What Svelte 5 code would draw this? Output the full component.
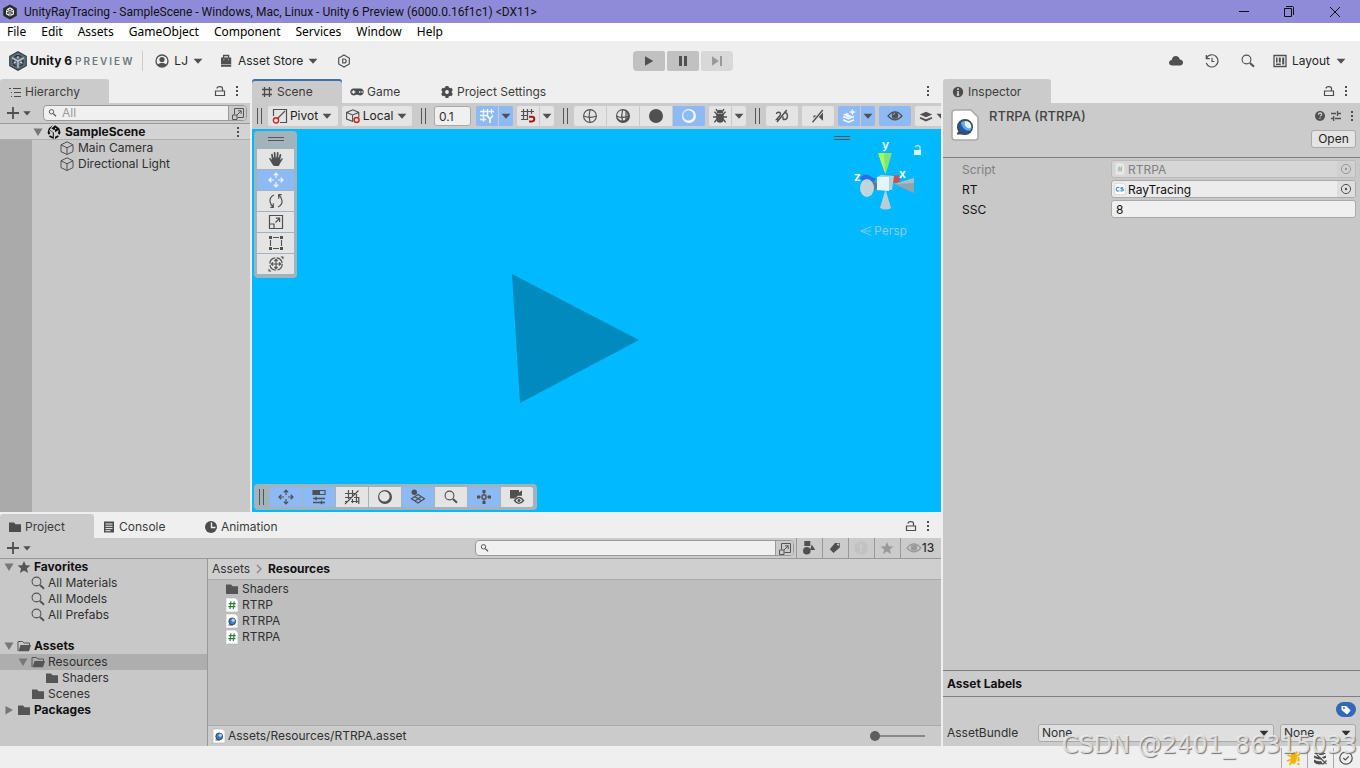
<script>
  const S = 'fill="none" stroke="currentColor"';
  const icons = {
    unity: '<path d="M8 .5 14.8 4.3v7.5L8 15.5 1.2 11.8V4.3z" fill="#2b2b2b"/><path d="M8 3.2 12 5.4v4.8L8 12.6 4 10.2V5.4z" fill="#ededed"/><path d="M8 8v4.6M8 8 4 5.4M8 8l4-2.6" stroke="#444" stroke-width="1"/><circle cx="8" cy="5.6" r=".9" fill="#222"/><circle cx="6" cy="9" r=".9" fill="#222"/><circle cx="10" cy="9" r=".9" fill="#222"/>',
    unity6: '<path d="M8 .6 14.6 4.3v7.4L8 15.4 1.4 11.7V4.3z" fill="#5d6b75" stroke="#2e3a43" stroke-width=".9"/><path d="M8 2.6v3.4M3.2 5.4 8 8l4.8-2.6M8 8v5.4M3.4 10.4l3-1.8M12.6 10.4l-3-1.8" fill="none" stroke="#c6d3db" stroke-width="1"/><path d="M5.2 4.9 8 3.4l2.8 1.5M4 7.2v3.3L6.6 12M12 7.2v3.3L9.4 12" fill="none" stroke="#27323a"/>',
    scene: '<path d="M6.8 1.2 2.8 4.3 1.6 8.4l.8 2.3 1.9-1.2L3 6l3.8 2.2v4.6l-3-1.6L3 12.8l4.8 2.3V8.4L3.7 5.8zM9 1.2l4.3 3 1.2 4.2-.8 2.3-1.8-1.2.8-3.4-3.7 2.1v4.6l3-1.6.8 1.5L9 15.1M5.4 4.6 8 6.1l2.8-1.5L9 3.7V1.2M6.8 1.2v2.5z" fill="#111"/>',
    user: `<circle cx="8" cy="8" r="6" ${S} stroke-width="1.3"/><circle cx="8" cy="6.5" r="2.6" fill="currentColor"/><path d="M3.6 11.6Q8 8 12.4 11.6 10.8 13.8 8 13.8T3.6 11.6" fill="currentColor"/>`,
    bag: `<path d="M5.6 5V2.5h5V5" ${S} stroke-width="1.3"/><path d="M3 4.5h10.2v9.3H3z" fill="currentColor"/><path d="M5.9 5.8v1.5M10.3 5.8v1.5M3 11.5h10" stroke="#aaa"/>`,
    hex: `<path d="M8 1.9 13.3 5v6L8 14.1 2.7 11V5z" ${S} stroke-width="1.2"/><path d="M6.7 6h1.4a2 2 0 0 1 0 4H6.7z" ${S} stroke-width="1.2"/>`,
    hierarchy: `<path d="M6 4.5h8M7 8.5h7M7 12.5h7M2 4.5h2M4 8.5h1M4 12.5h1" ${S}/>`,
    lock: `<path d="M3.5 8h9v4.5h-9zM5 5.5C5 3 10.5 3 10.5 5.5V8" ${S} stroke-width="1.2"/>`,
    dots: '<path d="M7 3h2v2H7zm0 4h2v2H7zm0 4h2v2H7z" fill="currentColor"/>',
    plus: `<path d="M8 2v12M2 8h12" ${S} stroke-width="1.8"/>`,
    down: '<path d="M3 5.5h10L8 11.2z" fill="currentColor"/>',
    right: '<path d="M4.5 4 12 8l-7.5 4.5z" fill="currentColor"/>',
    fold: '<path d="M3.5 4.5h9L8 12z" fill="currentColor"/>',
    find: `<circle cx="6.5" cy="6.5" r="4.4" ${S} stroke-width="1.1"/><path d="m10 10 4 3.7" ${S} stroke-width="2"/>`,
    smallfind: `<circle cx="6.5" cy="6.8" r="2.2" ${S}/><path d="m8.3 8.6 2.7 2.7" ${S} stroke-width="1.3"/>`,
    popup: `<path d="M4.5 8.5v-6h9v9h-6M2.5 9h4.5v4.5H2.5z" ${S}/><path d="m7 9 4-4M8 4.8h3.2V8" ${S}/>`,
    cube: `<path d="M8 1.8 14 4.8v6.8L8 14.5 2 11.6V4.8zM2 4.8l6 3 6-3M8 7.8v6.7" ${S}/>`,
    grid: `<path d="M5.5 3v10M10.5 3v10M3 5.5h10M3 10.5h10" ${S} stroke-width="1.3"/>`,
    game: '<path d="M5 4.5h6a3.5 3.5 0 1 1-2 6.2H7A3.5 3.5 0 1 1 5 4.5z" fill="currentColor"/><path d="M2.7 8h3.6M4.5 6.2v3.6M10 8h1.4M12.5 8h1.2" stroke="#eee" stroke-width="1.3"/>',
    gear: `<circle cx="8" cy="8" r="3.4" ${S} stroke-width="3"/><path d="M8 2v2M8 12v2M2.8 5l1.8 1M11.4 10l1.8 1M2.8 11l1.8-1M11.4 6l1.8-1" ${S} stroke-width="3"/>`,
    pivot: `<path d="M1.5 8V1.5h13v13H8M6 10l7-7" ${S} stroke-width="1.2"/><circle cx="4" cy="12.4" r="2.6" fill="#e4e4e4" stroke="#c22" stroke-width="1.4"/>`,
    local: `<path d="M8 13.5 1.6 11V4.4L8 1.8l5.8 2.6v5M1.6 4.4l6 2.5 6.2-2.5M7.6 7v6.4" ${S} stroke-width="1.1"/><circle cx="11.6" cy="12" r="2.5" fill="#e4e4e4" stroke="#c22" stroke-width="1.4"/>`,
    gridy: `<path d="M4.5 1v12.5M8.5 1v7M12.5 1v5M1 3.5h14M1 7.5h8M1 11.5h6" ${S} stroke-width="1.3"/><path d="m8 7.5 3 3.5 3-3.5M11 11v4" ${S} stroke-width="1.7"/>`,
    snap: `<path d="M3.5 1v11M7.5 1v11M11.5 1v5M1 3.5h13M1 7.5h6M1 11.5h6" ${S} stroke-width="1.2"/><path d="M9 8.8h3a2.3 2.3 0 0 1 0 4.6H9" fill="none" stroke="#b51217" stroke-width="2"/>`,
    wire: `<circle cx="8" cy="8" r="6.4" ${S} stroke-width="1.1"/><path d="M1.5 8Q8 10.7 14.5 8M8 1.5Q6.2 8 8 14.5" ${S} stroke-width="1.1"/>`,
    shadewire: `<path fill-rule="evenodd" d="M8 1a7 7 0 1 1 0 14A7 7 0 0 1 8 1zM7.4 2.2a5.2 5.2 0 1 0 0 10.4 5.2 5.2 0 0 0 0-10.4z" fill="currentColor"/><path d="M1.8 8.2Q7 10.6 12.8 8.4M7.6 1.8Q6 7.5 7.4 13M11 3v9" ${S} stroke-width="1.2"/>`,
    solid: '<circle cx="8" cy="8" r="7" fill="currentColor"/>',
    shaded: '<path fill-rule="evenodd" d="M8 1a7 7 0 1 1 0 14A7 7 0 0 1 8 1zM7.4 2.2a5.2 5.2 0 1 0 0 10.4 5.2 5.2 0 0 0 0-10.4z" fill="currentColor"/>',
    bug: `<path d="M4.2 5.5h7.6v5a3.8 4.2 0 0 1-7.6 0zM4.8 5a3.2 3.2 0 0 1 6.4 0z" fill="currentColor"/><path d="M5.5 3.4 4 1M10.5 3.4 12 1M5 6.5 2.4 3.6M11 6.5l2.6-2.9M5 9H1M11 9h4M5 11l-2.6 3.4M11 11l2.6 3.4" ${S} stroke-width="1.4"/>`,
    two: `<path d="M2.5 6Q2.7 4 5 4.3 7.7 5 5.6 8L2.5 11.6h3M9 11.5h1.4c4 0 4-7 0-7M9 8.5v3M3 14 12.8 2" ${S} stroke-width="1.4"/>`,
    audio: `<path d="M2.5 14.2 12.8 2" ${S} stroke-width="1.4"/><path d="M3.5 7.4h3L3.5 10zM8.8 9 13 4.5v8.3z" fill="currentColor"/>`,
    fx: `<path d="m2 8.5 5.5 2.3L13 8.5M2 11.7l5.5 2.4 5.5-2.4" ${S} stroke-width="1.5"/><path d="M2 6.6 6.5 4.7q1 2 3 2.6l1.6 1-4 1.4zM11.4.6l1 2.4 2.6 1-2.6 1-1 2.6-1-2.6-2.6-1 2.6-1z" fill="currentColor"/>`,
    eye: `<path d="M1 8q7-8.2 14 0-7 7.8-14 0z" ${S} stroke-width="1.2"/><circle cx="8" cy="7.5" r="3.2" fill="currentColor"/><path d="M6.5 7q0-1.5 1.5-1.6" fill="none" stroke="#aaa"/>`,
    layers: '<path d="M8 3.8 14.2 6.5 8 9.3 1.8 6.5z" fill="currentColor"/><path d="M2 9.7 8 12.4l6-2.7" fill="none" stroke="currentColor" stroke-width="1.8"/>',
    hand: `<path d="M4.7 8 4 3.6M6.9 7.5 6.6 1.8M9.3 7.5l.4-5.7M11.4 8l1-4.2" ${S} stroke-width="1.7" stroke-linecap="round"/><path d="M1 7.4q1.2-.8 2 .4l1 1V6.6h8.2v2.6l1.4-1.7q1.4-.5 1.2.6L12 12.6 10.8 15H6Q4 13 1 7.4z" fill="currentColor"/>`,
    move: `<path d="M8 1v5M8 10v5M1 8h5M10 8h5M5.8 3.3 8 1l2.2 2.3M5.8 12.7 8 15l2.2-2.3M3.3 5.8 1 8l2.3 2.2M12.7 5.8 15 8l-2.3 2.2" ${S} stroke-width="1.2"/>`,
    rotate: `<path d="M6 2Q1.5 4.2 2 8.4q.5 3.2 3 5.6M2.3 14.3h3v-4M10 14q4.5-2.2 4-6.4-.5-3.2-3-5.6M13.7 1.7h-3v4" ${S} stroke-width="1.2"/>`,
    scale: `<path d="M1.5 1.5h13v13h-13zM1.5 10h4.5v4.5M7.5 8.5l4-4M7.8 4.2h3.8V8" ${S} stroke-width="1.2"/>`,
    rect: `<path d="M5 2.5h6M5 13.5h6M2.5 5v6M13.5 5v6" ${S} stroke-width="1.1"/><path d="M1 1h3v3H1zm11 0h3v3h-3zM1 12h3v3H1zm11 0h3v3h-3z" fill="currentColor"/>`,
    transform: `<circle cx="8" cy="8" r="6.2" ${S} stroke-width="1.2" stroke-dasharray="8 1.7"/><path d="M8 3v10M3 8h10M6.4 5 8 3.3 9.6 5M6.4 11 8 12.7 9.6 11M5 6.4 3.3 8 5 9.6M11 6.4 12.7 8 11 9.6" ${S} stroke-width="1.1"/><path d="M12.5.5h3v3zM.5 12.5v3h3z" fill="currentColor"/>`,
    settings: `<path d="M2 1.5h12v4H2z" ${S} stroke-width="1.2"/><path d="M2 1.5h7v4H2z" fill="currentColor"/><path d="M2 9.5h12M2 13.5h12M5 7.8v3.4M10.5 11.8v3.4" ${S} stroke-width="1.4"/>`,
    gridcut: `<path d="M4.5 1v9M8.5 1v6M8.5 10v4M12.5 5v9M14.8 8v7M1 4.5h10M1 8.5h6M10 8.5h5M1 12.5h2M7 12.5h8M1 15 14.5 1.5" ${S} stroke-width="1.2"/>`,
    plane: `<circle cx="4.3" cy="3.3" r="2.7" fill="currentColor"/><path d="m8 5.5 6.5 4.2L8 14 1.5 9.7zM5 7.7l6.3 4M11.3 7.5 5 12" ${S} stroke-width="1.2"/>`,
    orient: `<path d="M6.2 6.2h3.6v3.6H6.2z" ${S} stroke-width="1.2"/><path d="M8 2v4M8 10v4M2 8h4M10 8h4" ${S} stroke-width="1.2"/><path d="M6.5 1h3v3h-3zM6.5 12h3v3h-3zM1 6.5h3v3H1zM12 6.5h3v3h-3z" fill="currentColor"/>`,
    camera: `<path d="M1 1h9v2.5l3-2.2v5.4H9L6 9.5H1z" fill="currentColor"/><path d="M5.5 11.5q4.5-6 9 0-4.5 5.8-9 0z" ${S} stroke-width="1.4"/><circle cx="10" cy="11.4" r="1.5" fill="currentColor"/>`,
    folder: '<path d="M2 3.5h5L8.5 5.2H14v7.8H2z" fill="currentColor"/>',
    openfolder: `<path d="M2 13V3.5h4.5L8 5h5.5v2" ${S}/><path d="M4.5 7H15l-2 6.3H2.5z" fill="currentColor"/>`,
    console: '<path d="M3 2.5h10v11H3z" fill="currentColor"/><path d="M4.5 5h7M4.5 7.3h7M4.5 9.6h7M4.5 11.7h5" stroke="#efefef"/>',
    clock: '<circle cx="8" cy="8" r="6" fill="currentColor"/><path d="M8.5 3.5v5h4" fill="none" stroke="#eee" stroke-width="1.4"/>',
    star: '<path d="m8 2 1.8 4.2 4.7.3-3.6 3 1.1 4.4-4-2.4-4 2.4 1.1-4.4-3.6-3 4.7-.3z" fill="currentColor"/>',
    shapes: '<path d="M3.3 1h6v5h-6zM10.8 4.5 14.2 10H9z" fill="currentColor"/><circle cx="5.8" cy="10.7" r="3.8" fill="currentColor"/>',
    tag: '<path fill-rule="evenodd" d="M8 3h4.8v4.5L6.5 13 2.8 9.2zM10 4.6a1.1 1.1 0 1 0 2.2 0 1.1 1.1 0 0 0-2.2 0z" fill="currentColor"/>',
    pilltag: '<path fill-rule="evenodd" d="M3.5 4h4.6l4.6 4.5L9 12.5 3.5 8zM5 6a1 1 0 1 0 2 0 1 1 0 0 0-2 0z" fill="currentColor"/>',
    alert: '<path d="M5.3 1.5h5.4l3.8 3.8v5.4l-3.8 3.8H5.3l-3.8-3.8V5.3z" fill="#c2c2c2"/><path d="M8 4v5M8 10.7v1.8" stroke="#cdcdcd" stroke-width="1.7"/>',
    cloud: '<path d="M4.5 12.5Q1 12.2 1 9.8 1 7.4 3.8 7 4.3 3 7.8 3q3.2 0 4 3.6 3.2.3 3.2 3t-3 2.9z" fill="currentColor"/>',
    history: `<path d="M2.4 5.3A6.1 6.1 0 1 1 2.2 10M2.3 2v3.6h3.5M8 4.7v3.8h2.4" ${S} stroke-width="1.2"/>`,
    layout: `<path d="M2 2.5h12v11H2z" ${S} stroke-width="1.3"/><path d="M4 4.5h1.5v5H4zM6.8 4.5h2v5h-2zM10.2 4.5h2v7h-2zM4 10.5h4.8V12H4z" fill="currentColor"/>`,
    info: '<circle cx="8" cy="8" r="5.2" fill="currentColor"/><path d="M8 4.3v1.8M8 7v4.2M6.8 11h2.4" stroke="#ddd" stroke-width="1.5"/>',
    help: '<circle cx="8" cy="8" r="5" fill="currentColor"/><path d="M6.3 6.6q.2-1.6 1.8-1.6 1.7.1 1.6 1.5Q9.5 7.6 8 8.2M8 9.5v1.3" fill="none" stroke="#ccc" stroke-width="1.3"/>',
    preset: `<path d="M3 5.5h5M10 5.5h3M3 10.5h2M7 10.5h6M9.5 3v5M5.7 8v5" ${S} stroke-width="1.3"/>`,
    target: `<circle cx="8" cy="8" r="4.6" ${S}/><circle cx="8" cy="8" r="1.2" fill="currentColor"/>`,
    csharp: '<path d="M2 1h9.5L14 3.5V15H2z" fill="#fff" stroke="#b5b5b5" stroke-width=".6"/><path d="M7 4.3 6 12M10.3 4.3l-1 7.7M4.7 6.6h7M4.3 9.6h7" fill="none" stroke="#2f8236" stroke-width="1.2"/>',
    asset: '<path d="M2 1h9.5L14 3.5V15H2z" fill="#fff" stroke="#b5b5b5" stroke-width=".6"/><circle cx="8.2" cy="8.4" r="3.4" fill="#2f7fd4" stroke="#444"/><path d="M4.4 12h4.4" stroke="#444"/><circle cx="9.3" cy="7.2" r="1.7" fill="#a8d0f5"/>',
    compute: '<path d="M2 1.5h9.5L14 4v10.5H2z" fill="#fff" stroke="#bbb" stroke-width=".6"/><path d="M7.2 6.4Q4 5.2 3.9 8.3q.2 2.9 3.3 1.6M11.8 6.7q-3-.7-2.8.6.3.9 1.7.9 1.6.4.9 1.5-1 .8-3 .1" fill="none" stroke="#4c93e0" stroke-width="1.4"/>',
    fadedscript: '<path d="M3 1.5h8L13 4v10.5H3z" fill="#e8e8e8"/><path d="M7.3 5l-.6 6M9.7 5l-.6 6M5.6 7h5M5.3 9.2h5" stroke="#96bd98"/>',
    play: '<path d="M4 3.2 12.3 8 4 12.8z" fill="currentColor"/>',
    pause: '<path d="M4 3h3v10H4zm5 0h3v10H9z" fill="currentColor"/>',
    step: '<path d="M3 3.2 10 8l-7 4.8zM11 3h2v10h-2z" fill="currentColor"/>',
    persp: `<path d="M14 3 2 8l12 5M2 8h12" ${S}/>`,
    crumb: `<path d="m6 4 4 4-4 4" ${S} stroke-width="1.4"/>`,
    status: `<path d="M5 3.8q3-2.4 5.5 0l.3 5.2q-.6 5-3.4 5T4.4 10z" fill="#f0b400"/><path d="M6 4 5 1M9.5 4 11.5 1.5M5 6.5 1.5 5M5 9.5 1 11M5.5 12l-2 3M10 6.5 14 4" stroke="#f0b400" stroke-width="1.6"/><path d="M12.5 7v4.5M12.5 13v2" stroke="#f0b400" stroke-width="2"/>`,
    cache: `<path d="M2 3.5Q8 0 14 3.5 8 7 2 3.5M2 5.5q6 3.5 12 0v2.3q-6 3.4-12 0zM2 9.5q3 2.2 7 1.6L11 14q-6 1.5-9-1.8z" fill="currentColor"/><path d="m5.6 4 9.6 9" stroke="#efefef" stroke-width="1.2"/><path d="m5 5 9.5 9M10.5 14.5l4-4" ${S} stroke-width="1.2"/>`,
    check: `<circle cx="8" cy="8" r="6.2" ${S} stroke-width="1.2"/><path d="m5.3 8 2 2 3.5-3.6" ${S} stroke-width="1.2"/>`,
    min: '<path d="M3 7.5h10" stroke="#111"/>',
    max: '<path d="M3.5 4.5h7v8h-7zM5 2.5h6.5q1 0 1 1V11" fill="none" stroke="#111"/>',
    close: '<path d="m3 3 10 10M13 3 3 13" stroke="#111"/>'
  };

  const menus = ['File', 'Edit', 'Assets', 'GameObject', 'Component', 'Services', 'Window', 'Help'];
  const tools = [['hand', 'View'], ['move', 'Move'], ['rotate', 'Rotate'], ['scale', 'Scale'], ['rect', 'Rect'], ['transform', 'Transform']];
  const overlays = [['move', 'Tools', true], ['settings', 'Tool settings', true], ['gridcut', 'Grid and snap', false], ['shaded', 'Draw modes', false], ['plane', 'View options', true], ['find', 'Search', false], ['orient', 'Orientation', true], ['camera', 'Cameras', false]];
  const tree = [
    { d: 0, fold: 'fold', icon: 'star', name: 'Favorites', bold: true },
    { d: 1, icon: 'find', name: 'All Materials' },
    { d: 1, icon: 'find', name: 'All Models' },
    { d: 1, icon: 'find', name: 'All Prefabs' },
    { d: 0, fold: 'fold', icon: 'openfolder', name: 'Assets', bold: true, gap: true },
    { d: 1, fold: 'fold', icon: 'openfolder', name: 'Resources', selected: true },
    { d: 2, icon: 'folder', name: 'Shaders' },
    { d: 1, icon: 'folder', name: 'Scenes' },
    { d: 0, fold: 'right', icon: 'folder', name: 'Packages', bold: true }
  ];
  const files = [['folder', 'Shaders'], ['csharp', 'RTRP'], ['asset', 'RTRPA'], ['csharp', 'RTRPA']];
  let selectedTool = $state('move');
</script>

{#snippet icon(name, size = 16)}
  <svg class="icon" width={size} height={size} viewBox="0 0 16 16" aria-hidden="true">{@html icons[name]}</svg>
{/snippet}

{#snippet split(name, label, on)}
  <div class="split">
    <button class="tb narrow" class:on aria-label={label}>{@render icon(name)}</button>
    <button class="tb arrow" class:blue={on} aria-label="{label} options">{@render icon('down', 14)}</button>
  </div>
{/snippet}

<div class="app">
  <header class="title">
    {@render icon('unity')}
    <span>UnityRayTracing - SampleScene - Windows, Mac, Linux - Unity 6 Preview (6000.0.16f1c1) &lt;DX11&gt;</span>
    <div class="winbtns">
      <button aria-label="Minimize">{@render icon('min')}</button>
      <button aria-label="Restore">{@render icon('max')}</button>
      <button aria-label="Close">{@render icon('close')}</button>
    </div>
  </header>

  <nav class="menu">
    {#each menus as m}<button>{m}</button>{/each}
  </nav>

  <div class="maintools">
    <div class="side">
      <div class="brand">{@render icon('unity6', 20)}<b>Unity 6</b><span>PREVIEW</span></div>
      <button class="flat account">{@render icon('user')}<span>LJ</span>{@render icon('down', 14)}</button>
      <button class="flat store">{@render icon('bag')}<span>Asset Store</span>{@render icon('down', 14)}</button>
      <button class="flat" aria-label="Services">{@render icon('hex')}</button>
    </div>
    <div class="playbar">
      <button aria-label="Play">{@render icon('play')}</button>
      <button aria-label="Pause">{@render icon('pause')}</button>
      <button aria-label="Step" class="dim">{@render icon('step')}</button>
    </div>
    <div class="side end">
      <button class="flat" aria-label="Cloud">{@render icon('cloud')}</button>
      <button class="flat" aria-label="History">{@render icon('history')}</button>
      <button class="flat" aria-label="Search">{@render icon('find')}</button>
      <button class="flat layout">{@render icon('layout')}<span>Layout</span>{@render icon('down', 14)}</button>
    </div>
  </div>

  <main>
    <div class="left">
      <div class="upper">
        <section class="hierarchy">
          <div class="tabs">
            <button class="tab active w109">{@render icon('hierarchy')}Hierarchy</button>
            <div class="tabend">{@render icon('lock')}{@render icon('dots')}</div>
          </div>
          <div class="bar">
            <button class="flat add" aria-label="Create">{@render icon('plus')}{@render icon('down', 12)}</button>
            <label class="search">{@render icon('smallfind')}<input placeholder="All" aria-label="Search hierarchy" /><span class="pop">{@render icon('popup')}</span></label>
          </div>
          <div class="sceneRow"><span class="grey">{@render icon('fold')}</span>{@render icon('scene')}<b>SampleScene</b><span class="more">{@render icon('dots')}</span></div>
          <div class="objects">
            <div class="gutter"></div>
            <ul>
              <li>{@render icon('cube')}Main Camera</li>
              <li>{@render icon('cube')}Directional Light</li>
            </ul>
          </div>
        </section>

        <section class="scene">
          <div class="tabs">
            <button class="tab active focus w90">{@render icon('grid')}Scene</button>
            <button class="tab w90">{@render icon('game')}Game</button>
            <button class="tab">{@render icon('gear')}Project Settings</button>
            <div class="tabend">{@render icon('dots')}</div>
          </div>
          <div class="scenebar">
            <i class="grip"></i>
            <button class="tb text">{@render icon('pivot')}Pivot{@render icon('down', 14)}</button>
            <button class="tb text">{@render icon('local')}Local{@render icon('down', 14)}</button>
            <i class="grip"></i>
            <input class="snapval" value="0.1" aria-label="Snap increment" />
            {@render split('gridy', 'Grid', true)}
            {@render split('snap', 'Snapping', false)}
            <i class="grip"></i>
            <div class="split">
              <button class="tb" aria-label="Wireframe">{@render icon('wire')}</button>
              <button class="tb" aria-label="Shaded wireframe">{@render icon('shadewire')}</button>
              <button class="tb" aria-label="Unlit">{@render icon('solid')}</button>
              <button class="tb on" aria-label="Shaded">{@render icon('shaded')}</button>
            </div>
            {@render split('bug', 'Debug', false)}
            <i class="grip"></i>
            <button class="tb" aria-label="2D view">{@render icon('two')}</button>
            <button class="tb" aria-label="Audio">{@render icon('audio')}</button>
            {@render split('fx', 'Effects', true)}
            <button class="tb blue" aria-label="Visibility">{@render icon('eye')}</button>
            <button class="tb layersbtn" aria-label="Layers">{@render icon('layers')}{@render icon('down', 14)}</button>
          </div>
          <div class="view">
            <svg class="world" viewBox="0 0 689 383" preserveAspectRatio="xMidYMid slice" aria-hidden="true"><path d="M260 145 387 211 268 274z" fill="#008abd" /></svg>
            <div class="toolbox">
              <i class="hgrip"></i>
              {#each tools as [name, label]}
                <button class="tb" class:on={selectedTool === name} aria-label={label} onclick={() => (selectedTool = name)}>{@render icon(name)}</button>
              {/each}
            </div>
            <div class="gizmo">
              <i class="hgrip"></i>
              <svg width="76" height="80" viewBox="0 0 76 80" aria-hidden="true">
                <path d="M11 43q2-6 8-4l8 4-4 6z" fill="#2a6fe8" /><circle cx="47" cy="43" r="4" fill="#c45555" />
                <path d="M29 17h14l-6 20h-1z" fill="#80e579" /><path d="M29 17h6l1 20z" fill="#a6ff62" />
                <path d="M36 55h1l5 17q-5 3-11 0z" fill="#b9cdd5" />
                <path d="m45 48 20-6v15z" fill="#8fa6b2" /><path d="m45 48 20-6v5z" fill="#a7bdc8" />
                <path d="M18 44l14 4-11 11z" fill="#607c8c" /><ellipse cx="18" cy="52" rx="7" ry="9" fill="#bfd4df" />
                <path d="M28 41l4-2 13 1-2 14-15 0z" fill="#b3cdd8" /><path d="M28 41h12v14l-12-1z" fill="#e2f5fc" />
                <g fill="#fff" font-size="12" font-weight="600"><text x="33" y="13">y</text><text x="5" y="45">z</text><text x="50" y="42">x</text></g>
                <path d="M65 14h7v5h-7z" fill="#d6f2fd" /><path d="M66 11q3-3 5 0v3" fill="none" stroke="#b1e5fa" stroke-width="1.4" />
              </svg>
              <button class="persp">{@render icon('persp', 14)}Persp</button>
            </div>
            <div class="overlaybar">
              <i class="grip"></i>
              <div class="split">
                {#each overlays as [name, label, on]}
                  <button class="tb" class:blue={on} aria-label={label}>{@render icon(name)}</button>
                {/each}
              </div>
            </div>
          </div>
        </section>
      </div>

      <section class="project">
        <div class="tabs">
          <button class="tab active w94">{@render icon('folder')}Project</button>
          <button class="tab w102">{@render icon('console')}Console</button>
          <button class="tab">{@render icon('clock')}Animation</button>
          <div class="tabend">{@render icon('lock')}{@render icon('dots')}</div>
        </div>
        <div class="bar">
          <button class="flat add" aria-label="Create">{@render icon('plus')}{@render icon('down', 12)}</button>
          <label class="search far">{@render icon('smallfind')}<input aria-label="Search project" /><span class="pop">{@render icon('popup')}</span></label>
          <div class="filters">
            <button aria-label="Filter by type">{@render icon('shapes')}</button>
            <button aria-label="Filter by label">{@render icon('tag')}</button>
            <button aria-label="Filter by log">{@render icon('alert')}</button>
            <button aria-label="Save search" class="faint">{@render icon('star')}</button>
            <button class="count"><span class="faint">{@render icon('eye')}</span>13</button>
          </div>
        </div>
        <div class="browser">
          <ul class="tree">
            {#each tree as t}
              <li class:selected={t.selected} class:gap={t.gap} style="padding-left: {1 + t.d * 14}px">
                <span class="foldslot">{#if t.fold}{@render icon(t.fold)}{/if}</span>
                {@render icon(t.icon)}<span class:bold={t.bold}>{t.name}</span>
              </li>
            {/each}
          </ul>
          <div class="content">
            <div class="crumbs"><a href="#assets">Assets</a>{@render icon('crumb')}<b>Resources</b></div>
            <ul class="files">
              {#each files as [ic, name]}<li>{@render icon(ic)}{name}</li>{/each}
            </ul>
            <div class="path">{@render icon('asset')}<span>Assets/Resources/RTRPA.asset</span><input type="range" min="0" max="100" value="0" aria-label="Icon size" /></div>
          </div>
        </div>
      </section>
    </div>

    <section class="inspector">
      <div class="tabs">
        <button class="tab active w108">{@render icon('info')}Inspector</button>
        <div class="tabend">{@render icon('lock')}{@render icon('dots')}</div>
      </div>
      <div class="ihead">
        <svg width="28" height="32" viewBox="0 0 28 32" aria-hidden="true">
          <path d="M4 1h16l7 7v20q0 3-3 3H4q-3 0-3-3V4q0-3 3-3z" fill="#fff" stroke="#aaa" stroke-width="1.6" />
          <circle cx="14" cy="18" r="7.2" fill="#155bad" stroke="#474747" stroke-width="1.7" /><path d="M10 13.4Q14 10.6 18 13.2q4.4 4.6 1.4 8.4-4 .6-7-2.4-2.6-3-2.4-5.8z" fill="#65a9e9" /><path d="M14 12q6 0 6.2 6-2 2.4-4.6.2T14 12" fill="#e6f4ff" /><path d="M6 24.5h8M7.4 22.4l1.4 2" stroke="#474747" stroke-width="1.8" />
        </svg>
        <h2>RTRPA (RTRPA)</h2>
        <div class="iactions">
          <div>{@render icon('help')}{@render icon('preset')}{@render icon('dots')}</div>
          <button class="open">Open</button>
        </div>
      </div>
      <div class="fields">
        <div class="field faded"><span>Script</span><div class="box">{@render icon('fadedscript', 14)}<span>RTRPA</span><button disabled aria-label="Pick script">{@render icon('target')}</button></div></div>
        <div class="field"><span>RT</span><div class="box">{@render icon('compute', 14)}<span>RayTracing</span><button aria-label="Pick RT">{@render icon('target')}</button></div></div>
        <div class="field"><label for="ssc">SSC</label><input id="ssc" class="box" value="8" /></div>
      </div>
      <div class="labels">
        <h3>Asset Labels</h3>
        <div class="pillrow"><button class="pill" aria-label="Add label">{@render icon('pilltag')}</button></div>
        <div class="bundle">
          <label for="bundle">AssetBundle</label>
          <span class="select wide"><select id="bundle"><option>None</option></select>{@render icon('down', 14)}</span>
          <span class="select"><select aria-label="Variant"><option>None</option></select>{@render icon('down', 14)}</span>
        </div>
      </div>
    </section>
  </main>

  <footer>
    <button aria-label="Debugger">{@render icon('status')}</button>
    <button aria-label="Cache server">{@render icon('cache')}</button>
    <button aria-label="Progress">{@render icon('check')}</button>
  </footer>
  <div class="mark">CSDN @2401_86315033</div>
</div>

<style>
  :global(body) { margin: 0; background: #efefef; }
  .app { position: relative; display: flex; flex-direction: column; min-height: 100vh; overflow: hidden; background: #efefef; color: #303030; font: 12px/16px Inter, sans-serif; }
  .app * { box-sizing: border-box; }
  button, input, select { margin: 0; padding: 0; border: 0; background: none; color: inherit; font: inherit; outline: none; }
  ul, h2, h3 { list-style: none; margin: 0; padding: 0; font-size: inherit; }
  .icon { flex: none; display: block; }
  b, .bold { font-weight: 700; color: #111; }

  .title { display: flex; align-items: center; height: 23px; padding: 0 1px 0 2px; gap: 6px; background: #8f8bd8; color: #111; font-family: Roboto, sans-serif; }
  .winbtns { display: flex; margin-left: auto; }
  .winbtns button { display: grid; place-items: center; width: 45px; height: 23px; }
  .winbtns button:last-child { width: 48px; }
  .menu { display: flex; height: 18px; padding-left: 7px; gap: 15px; background: #fff; color: #000; font: 12px/18px "Noto Sans", sans-serif; }

  .maintools { display: flex; align-items: center; height: 38px; padding-top: 2px; color: #3f3f3f; }
  .side { flex: 1; display: flex; align-items: center; }
  .end { justify-content: flex-end; gap: 20px; padding-right: 12px; }
  .flat { display: flex; align-items: center; color: #505050; }
  .flat span { color: #262626; }
  .brand { display: flex; align-items: center; padding: 0 8px 0 8px; gap: 2px; border-right: 1px solid #ccc; line-height: 12px; }
  .brand span { margin-left: 1px; color: #6b7780; font-size: 10px; font-weight: 600; letter-spacing: 2px; }
  .account { margin-left: 11px; gap: 4px; }
  .store { margin: 0 16px 0 13px; gap: 4px; }
  .account :global(svg:last-child), .store :global(svg:last-child) { margin-left: -1px; }
  .playbar { display: flex; gap: 2px; margin-left: 18px; }
  .playbar button { display: grid; place-items: center; width: 32px; height: 20px; border-radius: 2px; background: #c1c1c1; color: #505050; }
  .playbar button:first-child { border-radius: 4px 2px 2px 4px; }
  .playbar .dim { border-radius: 2px 4px 4px 2px; background: #d8d8d8; color: #999; }
  .layout { gap: 4px; margin-left: -4px; }

  main { flex: 1; display: flex; gap: 2px; }
  .left { flex: 1; min-width: 0; display: flex; flex-direction: column; gap: 2px; }
  .upper { flex: 1; display: flex; gap: 2px; }
  .hierarchy { flex: none; width: 250px; display: flex; flex-direction: column; background: #c8c8c8; }
  .scene { flex: 1; min-width: 0; display: flex; flex-direction: column; }
  .tabs { flex: none; display: flex; height: 24px; background: #efefef; color: #4c4c4c; }
  .tab { display: flex; align-items: center; padding: 2px 7px 0; gap: 2px; border-radius: 3px 3px 0 0; color: #3c3c3c; text-align: left; white-space: nowrap; }
  .tab :global(svg) { color: #4c4c4c; }
  .tab.active { background: #cbcbcb; }
  .focus { box-shadow: inset 0 2px #3a72b0; }
  .w90 { width: 90px; } .w94 { width: 94px; } .w102 { width: 102px; } .w108 { width: 108px; } .w109 { width: 109px; }
  .tabend { display: flex; align-items: center; margin-left: auto; padding-right: 5px; gap: 1px; }
  .bar { flex: none; display: flex; height: 21px; border-bottom: 1px solid #999; background: #cbcbcb; }
  .add { flex: none; width: 43px; padding-left: 5px; }
  .search { flex: 1; min-width: 0; display: flex; align-items: center; height: 16px; margin: 2px 3px 0 0; padding-left: 1px; border: 1px solid #999; border-radius: 4px; background: #f0f0f0; color: #555; }
  .search input { flex: 1; min-width: 0; height: 14px; padding-left: 1px; }
  .search input::placeholder { color: #999; opacity: 1; }
  .pop { display: grid; place-items: center; width: 18px; height: 14px; border-left: 1px solid #999; border-radius: 0 3px 3px 0; background: #cbcbcb; overflow: hidden; }
  .far { flex: none; width: 319px; margin-left: auto; margin-right: 2px; }
  .sceneRow { display: flex; align-items: center; height: 16px; padding-left: 30px; border-bottom: 1px solid #afafaf; background: #d3d3d3; color: #505050; }
  .sceneRow b { margin-left: 3px; }
  .grey { color: #777; }
  .more { margin-left: auto; padding-right: 4px; }
  .objects { flex: 1; display: flex; }
  .gutter { width: 32px; background: #aaa; }
  .objects li { display: flex; padding-left: 27px; gap: 3px; height: 16px; }
  .objects :global(svg) { color: #505050; }

  .scenebar { flex: none; display: flex; align-items: center; gap: 4px; height: 26px; background: #cbcbcb; overflow: hidden; }
  .grip { flex: none; width: 5px; height: 16px; margin: 0 2px 0 5px; border: solid #555; border-width: 0 1px; }
  .tb { flex: none; display: flex; align-items: center; justify-content: center; width: 32px; height: 20px; border-radius: 2px; background: #e4e4e4; color: #505050; }
  .on { background: #8db9f5; color: #f3f8ff; }
  .blue { background: #8db9f5; }
  .text { width: 70px; gap: 2px; color: #222; }
  .text :global(svg) { color: #505050; }
  .narrow { width: 22px; }
  .arrow { width: 14px; }
  .split { display: flex; gap: 1px; }
  .split .tb { border-radius: 0; }
  .split .tb:first-child { border-radius: 2px 0 0 2px; }
  .split .tb:last-child { border-radius: 0 2px 2px 0; }
  .snapval { flex: none; width: 37px; height: 20px; margin: 0 1px 0 2px; padding-left: 4px; border: 1px solid #aaa; border-radius: 3px; background: #f0f0f0; }
  .layersbtn { width: 38px; justify-content: flex-start; padding-left: 3px; }
  .view { position: relative; flex: 1; background: #00b9ff; overflow: hidden; }
  .world { position: absolute; inset: 0; width: 100%; height: 100%; }
  .toolbox { position: absolute; left: 2px; top: 2px; display: flex; flex-direction: column; align-items: center; gap: 1px; width: 43px; padding: 6px 3px 4px; border-radius: 4px; background: #a2b3bc; }
  .toolbox .tb { width: 37px; border-radius: 0; }
  .hgrip { display: block; width: 16px; height: 4px; margin-bottom: 7px; border: solid #555; border-width: 1px 0; }
  .gizmo { position: absolute; right: 16px; top: 7px; display: flex; flex-direction: column; align-items: center; }
  .gizmo .hgrip { position: absolute; left: -7px; }
  .gizmo svg { margin-left: 8px; }
  .persp { display: flex; align-items: center; gap: 1px; margin-top: 7px; color: #8bcbe3; }
  .persp :global(svg) { margin: 0; }
  .overlaybar { position: absolute; left: 2px; bottom: 2px; display: flex; align-items: center; height: 26px; padding-right: 4px; border-radius: 4px; background: #a2b3bc; }
  .overlaybar .grip { margin-right: 6px; }

  .project { flex: none; display: flex; flex-direction: column; height: 232px; background: #c8c8c8; }
  .filters { display: flex; }
  .filters button { display: flex; align-items: center; justify-content: center; width: 26px; height: 20px; padding-right: 2px; border-left: 1px solid #999; color: #505050; }
  .filters .count { width: 41px; color: #303030; font-weight: 500; }
  .faint, .filters .faint { color: #999; }
  .browser { flex: 1; display: flex; min-height: 0; }
  .tree { width: 207px; }
  .tree li { display: flex; align-items: center; height: 16px; }
  .tree li > span:last-child { margin-left: 2px; }
  .tree .gap { margin-top: 15px; }
  .foldslot { width: 15px; }
  .tree, .files { color: #303030; }
  .selected { background: #aeaeae; }
  .tree :global(svg), .files :global(svg) { color: #555; }
  .tree .foldslot :global(svg) { color: #777; }
  .content { flex: 1; display: flex; flex-direction: column; border-left: 1px solid #999; background: #bebebe; }
  .crumbs { display: flex; align-items: center; height: 21px; padding-left: 4px; gap: 1px; border-bottom: 1px solid #aaa; background: #cfcfcf; color: #888; }
  .crumbs a { color: #333; text-decoration: none; }
  .files { flex: 1; padding-top: 1px; }
  .files li { display: flex; padding-left: 16px; gap: 2px; height: 16px; }
  .path { display: flex; align-items: center; height: 21px; padding: 0 16px 0 3px; gap: 1px; border-top: 1px solid #aaa; background: #cbcbcb; }
  .path input { width: 55px; height: 12px; margin-left: auto; appearance: none; background: linear-gradient(#888, #888) center / 100% 2px no-repeat; }
  .path input::-webkit-slider-thumb { appearance: none; width: 10px; height: 10px; border-radius: 50%; background: #5e5e5e; }

  .inspector { flex: none; width: 417px; display: flex; flex-direction: column; background: #c8c8c8; }
  .inspector .tabend { padding-right: 6px; }
  .ihead { display: flex; height: 55px; padding: 6px 4px 0 8px; border-bottom: 1px solid #7f7f7f; background: #cbcbcb; }
  .ihead h2 { margin-left: 10px; font-size: 13px; font-weight: 500; color: #444; line-height: 15px; }
  .iactions { display: flex; flex-direction: column; align-items: flex-end; gap: 6px; margin-left: auto; color: #505050; }
  .iactions div { display: flex; margin: -1px -4px 0 0; }
  .open { width: 45px; height: 18px; border: 1px solid #aaa; border-radius: 3px; background: #e4e4e4; color: #222; line-height: 16px; }
  .fields { flex: 1; display: flex; flex-direction: column; gap: 2px; padding: 2px 4px 0 19px; color: #111; }
  .field { display: flex; align-items: center; height: 18px; }
  .field > :first-child { width: 149px; padding-top: 1px; }
  .box { flex: 1; min-width: 0; display: flex; align-items: center; height: 18px; padding-left: 1px; gap: 1px; border: 1px solid #aaa; border-radius: 3px; background: #ececec; overflow: hidden; }
  .box span { padding-top: 1px; }
  input.box { padding-left: 4px; background: #f0f0f0; }
  .box button { display: grid; place-items: center; width: 18px; height: 16px; margin-left: auto; background: #dedede; color: #505050; }
  .faded { color: #808080; }
  .faded .box { border-color: #bbb; background: #d6d6d6; }
  .faded button { background: #d0d0d0; color: #999; }
  .labels { background: #cbcbcb; border-top: 1px solid #7f7f7f; }
  .labels h3 { height: 26px; padding-left: 4px; border-bottom: 1px solid #7f7f7f; color: #111; line-height: 26px; }
  .pillrow { display: flex; justify-content: flex-end; height: 27px; padding: 5px 4px 0 0; }
  .pill { display: grid; place-items: center; width: 20px; height: 15px; border-radius: 8px; background: #3168b7; color: #fff; }
  .bundle { display: flex; gap: 6px; height: 22px; padding: 0 4px; }
  .bundle label { width: 85px; line-height: 18px; }
  .select { display: flex; align-items: center; width: 76px; height: 18px; border: 1px solid #aaa; border-radius: 3px; background: #dfdfdf; }
  .select.wide { flex: 1; }
  .select select { appearance: none; flex: 1; min-width: 0; padding-left: 3px; }
  .select :global(svg) { margin-right: 2px; }

  footer { display: flex; justify-content: flex-end; height: 22px; padding: 2px 1px 0 0; color: #505050; }
  footer button { display: grid; place-items: center; width: 26px; height: 20px; padding-right: 2px; border-left: 1px solid #aaa; }
  .mark { position: absolute; right: 3px; bottom: 7px; color: rgba(240, 240, 240, .8); font: 24px/32px "DejaVu Sans", sans-serif; text-shadow: 1px 1px 1px #777; pointer-events: none; white-space: nowrap; }
</style>
